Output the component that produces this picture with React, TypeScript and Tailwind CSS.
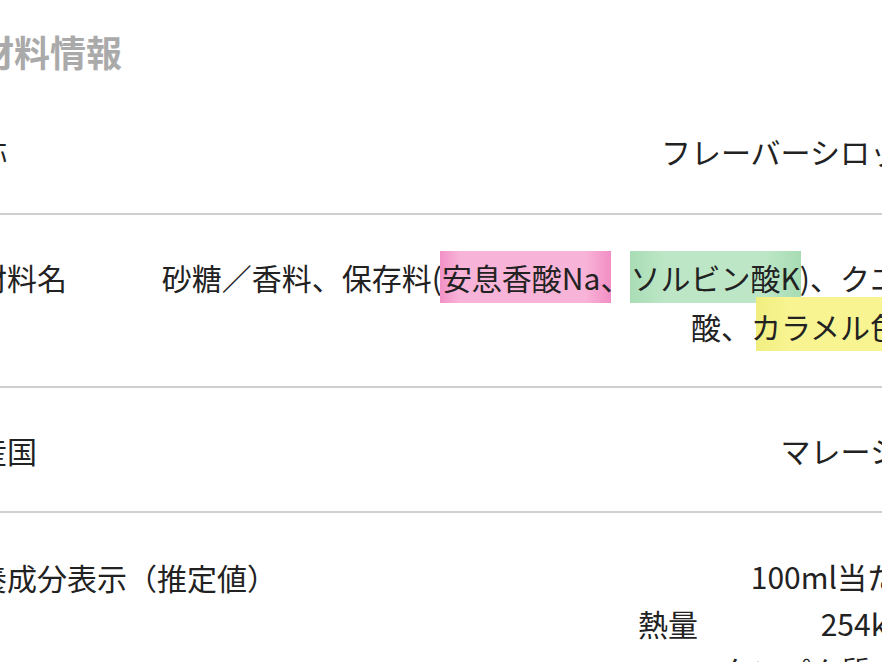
const ROW = 'flex items-start border-t-2 border-[#cfcfcf] pt-[38px]';

const Mark = ({ className, children }: { className: string; children: React.ReactNode }) => (
  <span className={className}>{children}</span>
);

export default function App() {
  return (
    <div className="w-[882px] h-[662px] overflow-hidden bg-white text-[#222] font-['Noto_Sans_CJK_JP','Noto_Sans',sans-serif]">
      <div className="ml-[-53px] w-[983px]">
        {/* Heading */}
        <h2 className="ml-[-5px] pt-[31px] mb-[18px] text-[36px] leading-[40px] font-bold text-[#aaaaaa] whitespace-nowrap">
          原材料情報
        </h2>

        <div className="text-[30px] leading-[49px]">
          {/* 名称 */}
          <div className="flex items-start pt-[38px] pb-[37px]">
            <div className="min-w-[198px] shrink-0 whitespace-nowrap">名称</div>
            <div className="flex-1 text-right whitespace-nowrap">フレーバーシロップ</div>
          </div>

          {/* 原材料名 */}
          <div className={`${ROW} pb-[35px]`}>
            <div className="min-w-[198px] shrink-0 whitespace-nowrap">原材料名</div>
            <div className="flex-1 text-right whitespace-nowrap">
              砂糖／香料、保存料(
              <Mark className="bg-[linear-gradient(90deg,#f291c6,#f8b4d8_12%,#f8b4d8_85%,#f28ec4)] py-[4px] pl-[2px] ml-[-2px] pr-[11px] mr-[-11px]">
                安息香酸Na
              </Mark>
              、
              <Mark className="bg-[linear-gradient(90deg,#a9ddb5,#bce6c6_20%,#bce6c6_80%,#a7dcb3)] py-[4px] pr-[1px] mr-[-1px]">
                ソルビン酸K
              </Mark>
              )、クエン
              <br />
              酸、
              <Mark className="bg-[linear-gradient(90deg,transparent_5px,#f1ee80_5px,#f7f491_20%,#f7f491)] pt-[7px] pb-[3px]">
                カラメル色素
              </Mark>
            </div>
          </div>

          {/* 原産国 */}
          <div className={`${ROW} pb-[36px]`}>
            <div className="min-w-[198px] shrink-0 whitespace-nowrap">原産国</div>
            <div className="flex-1 text-right whitespace-nowrap">マレーシア</div>
          </div>

          {/* 栄養成分表示 */}
          <div className="flex items-start border-t-2 border-[#cfcfcf] pt-[40px] pb-[37px]">
            <div className="min-w-[198px] shrink-0 whitespace-nowrap">栄養成分表示（推定値）</div>
            <div className="flex-1 flex flex-col items-end pr-[3px] leading-[47px] whitespace-nowrap">
              <div>100ml当たり</div>
              <div className="flex">
                <span>熱量</span>
                <span className="w-[229px] text-right">254kcal</span>
              </div>
              <div className="flex">
                <span>タンパク質</span>
                <span className="w-[56px] text-right">0g</span>
              </div>
              <div className="flex">
                <span>脂質</span>
                <span className="w-[229px] text-right">0g</span>
              </div>
            </div>
          </div>
        </div>
      </div>
    </div>
  );
}
